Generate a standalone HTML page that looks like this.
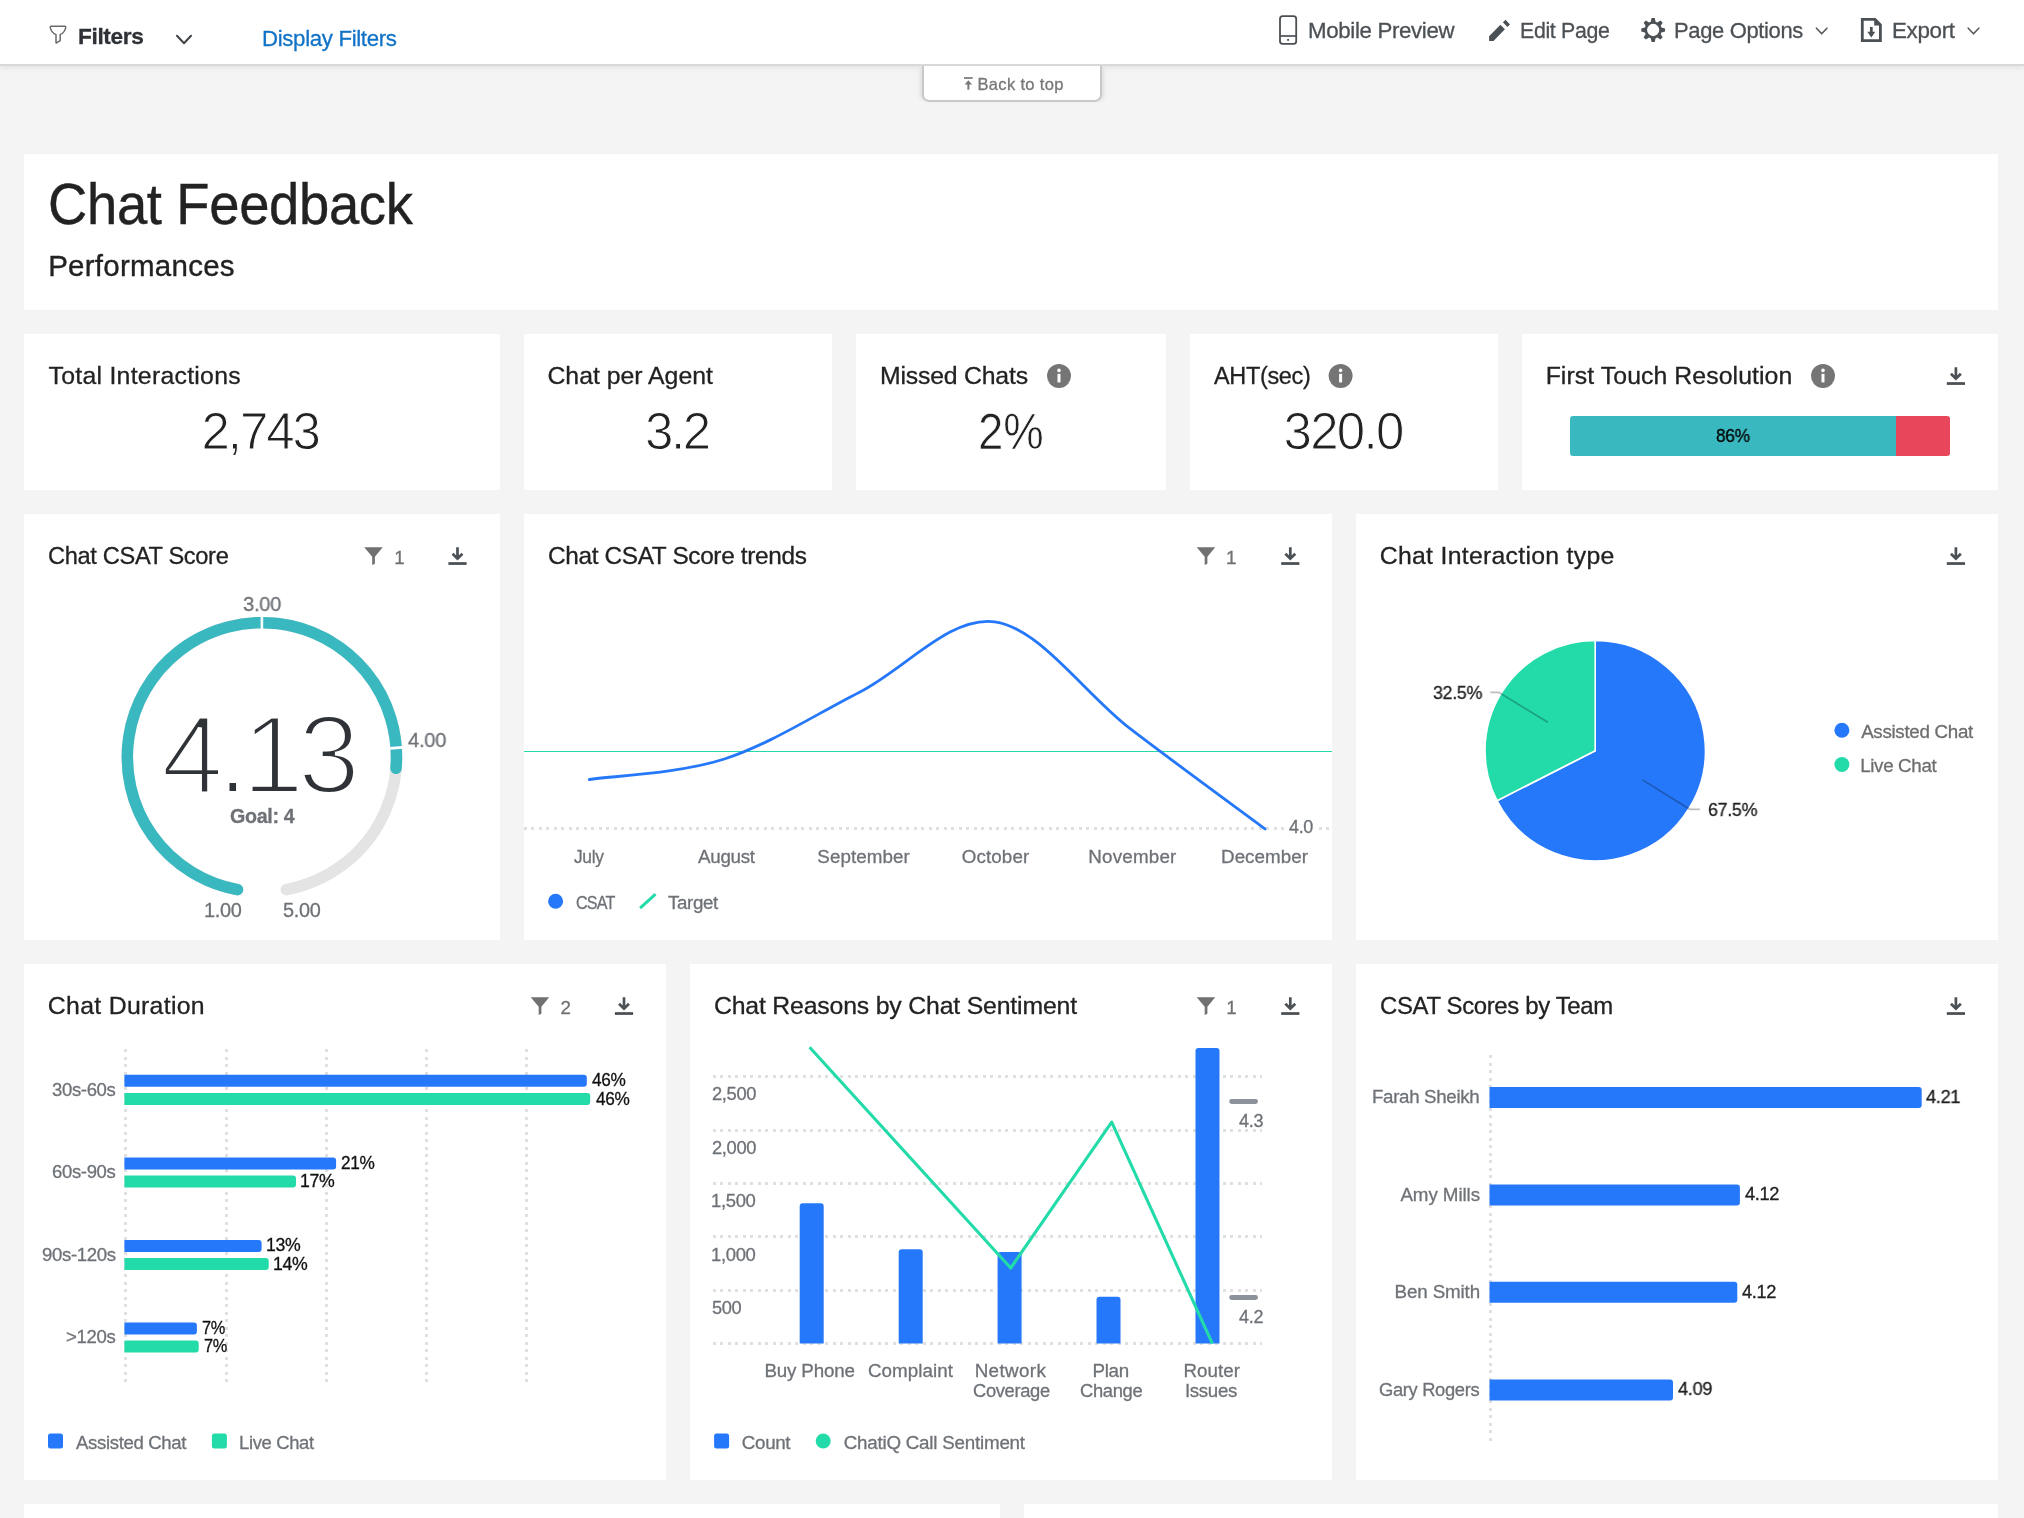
<!DOCTYPE html>
<html lang="en">
<head>
<meta charset="utf-8">
<title>Chat Feedback - Performances</title>
<meta name="viewport" content="width=2024">
<style>
*{box-sizing:border-box}
html,body{margin:0;padding:0}
body{width:2024px;height:1518px;overflow:hidden;background:#f4f4f4;font-family:"Liberation Sans",sans-serif;color:#222;position:relative}
#page{will-change:transform;position:absolute;left:0;top:0;width:2024px;height:1518px;overflow:hidden}
.card{position:absolute;background:#fff;overflow:visible}
.g{position:absolute;left:0;top:0;overflow:visible;display:block}
.t{position:absolute;white-space:nowrap;display:block;margin:0;padding:0;font-weight:400}
#bar{will-change:transform;position:absolute;left:0;top:0;width:2024px;height:66px;background:#fff;border-bottom:2px solid #d9d9d9;box-shadow:0 2px 5px rgba(0,0,0,.07)}
#btt{will-change:transform;position:absolute;left:922px;top:66px;width:180px;height:36px;background:#fff;border:2px solid #c9c9c9;border-top:0;border-radius:0 0 7px 7px;box-shadow:-4px 0 5px -3px rgba(0,0,0,.13),4px 0 5px -3px rgba(0,0,0,.13)}
#root{position:absolute;left:0;top:0;width:2024px;height:1518px;overflow:hidden}
@media (max-width:1100px){body{width:1012px;height:759px}#root{transform:scale(.5);transform-origin:0 0}}

</style>
</head>
<body>
<div id="root">
<main id="page">
<section class="card" id="hdr" style="left:24px;top:154px;width:1974px;height:156px">
<h1 class="t" style="left:23.87px;top:17.40px;font-size:56.5px;line-height:68px;transform:scaleX(0.9630);transform-origin:0 0;letter-spacing:-0.350px;-webkit-text-stroke:0.4px #222;">Chat Feedback</h1>
<p class="t" style="left:24.17px;top:93.93px;font-size:29.5px;line-height:35px;letter-spacing:0.252px;-webkit-text-stroke:0.35px #222;">Performances</p>
</section>
<section class="card" id="k1" style="left:24px;top:334px;width:476px;height:156px">
<h2 class="t" style="left:24.55px;top:26.65px;font-size:24.8px;line-height:30px;letter-spacing:0.273px;-webkit-text-stroke:0.3px #222;">Total Interactions</h2>
<span class="t" style="left:177.60px;top:67.40px;font-size:51.0px;line-height:61px;letter-spacing:-2.090px;-webkit-text-stroke:1.0px #fff;">2,743</span>
</section>
<section class="card" id="k2" style="left:524px;top:334px;width:308px;height:156px">
<h2 class="t" style="left:23.45px;top:26.65px;font-size:24.8px;line-height:30px;-webkit-text-stroke:0.3px #222;">Chat per Agent</h2>
<span class="t" style="left:121.10px;top:67.40px;font-size:51.0px;line-height:61px;letter-spacing:-2.467px;-webkit-text-stroke:1.0px #fff;">3.2</span>
</section>
<section class="card" id="k3" style="left:856px;top:334px;width:310px;height:156px">
<svg class="g" width="310" height="156" viewBox="856 334 310 156">
<circle cx="1059" cy="376" r="12" fill="#757575"/><rect x="1057.5" y="373.8" width="3" height="8.6" fill="#fff"/><circle cx="1059" cy="370.4" r="1.8" fill="#fff"/>
</svg>
<h2 class="t" style="left:23.95px;top:26.65px;font-size:24.8px;line-height:30px;letter-spacing:-0.192px;-webkit-text-stroke:0.3px #222;">Missed Chats</h2>
<span class="t" style="left:121.86px;top:67.25px;font-size:50.8px;line-height:61px;transform:scaleX(0.8968);transform-origin:0 0;-webkit-text-stroke:0.7px #fff;">2%</span>
</section>
<section class="card" id="k4" style="left:1190px;top:334px;width:308px;height:156px">
<svg class="g" width="308" height="156" viewBox="1190 334 308 156">
<circle cx="1340.6" cy="376" r="12" fill="#757575"/><rect x="1339.1" y="373.8" width="3" height="8.6" fill="#fff"/><circle cx="1340.6" cy="370.4" r="1.8" fill="#fff"/>
</svg>
<h2 class="t" style="left:23.95px;top:26.65px;font-size:24.8px;line-height:30px;transform:scaleX(0.9466);transform-origin:0 0;letter-spacing:-0.350px;-webkit-text-stroke:0.3px #222;">AHT(sec)</h2>
<span class="t" style="left:93.50px;top:67.40px;font-size:51.0px;line-height:61px;letter-spacing:-1.690px;-webkit-text-stroke:1.0px #fff;">320.0</span>
</section>
<section class="card" id="k5" style="left:1522px;top:334px;width:476px;height:156px">
<svg class="g" width="476" height="156" viewBox="1522 334 476 156">
<circle cx="1823" cy="376" r="12" fill="#757575"/><rect x="1821.5" y="373.8" width="3" height="8.6" fill="#fff"/><circle cx="1823" cy="370.4" r="1.8" fill="#fff"/>
<path d="M1955.90 367.15V379.15M1950.95 373.75L1955.90 378.70L1960.85 373.75" fill="none" stroke="#4b5055" stroke-width="2.7" stroke-linejoin="miter"/><rect x="1946.80" y="382.15" width="18.2" height="2.75" fill="#4b5055"/>
<path d="M1573 416h323v40h-323a3 3 0 0 1-3-3v-34a3 3 0 0 1 3-3z" fill="#3ab8c0"/><path d="M1896 416h51a3 3 0 0 1 3 3v34a3 3 0 0 1-3 3h-51z" fill="#e8465a"/>
</svg>
<h2 class="t" style="left:23.65px;top:26.65px;font-size:24.8px;line-height:30px;letter-spacing:0.084px;-webkit-text-stroke:0.3px #222;">First Touch Resolution</h2>
<span class="t" style="left:194.45px;top:90.25px;font-size:18.8px;line-height:23px;transform:scaleX(0.9223);transform-origin:0 0;letter-spacing:-0.350px;color:#000;-webkit-text-stroke:0.3px #000;">86%</span>
</section>
<section class="card" id="gauge" style="left:24px;top:514px;width:476px;height:426px">
<svg class="g" width="476" height="426" viewBox="24 514 476 426">
<path d="M364.20 547.15h18.5l-7.8 9.5v7l-2.7 1.3v-8.3z" fill="#717171"/>
<path d="M457.50 547.15V559.15M452.55 553.75L457.50 558.70L462.45 553.75" fill="none" stroke="#4b5055" stroke-width="2.7" stroke-linejoin="miter"/><rect x="448.40" y="562.15" width="18.2" height="2.75" fill="#4b5055"/>
<path d="M237.49 889.62A134.6 134.6 0 1 1 286.31 889.62" fill="none" stroke="#e4e4e4" stroke-width="11.5" stroke-linecap="round"/>
<path d="M237.49 889.62A134.6 134.6 0 1 1 396.04 768.35" fill="none" stroke="#3ab8c0" stroke-width="11.5" stroke-linecap="round"/>
<path d="M261.90 629.40L261.90 615.90" stroke="#fff" stroke-width="2.6"/>
<path d="M389.44 748.33L402.91 747.39" stroke="#fff" stroke-width="2.6"/>
</svg>
<h2 class="t" style="left:24.10px;top:26.65px;font-size:24.8px;line-height:30px;transform:scaleX(0.9521);transform-origin:0 0;letter-spacing:-0.350px;-webkit-text-stroke:0.3px #222;">Chat CSAT Score</h2>
<span class="t" style="left:370.15px;top:31.65px;font-size:18.8px;line-height:23px;color:#717171;-webkit-text-stroke:0.3px #717171;">1</span>
<span class="t" style="left:218.95px;top:76.65px;font-size:20.7px;line-height:25px;transform:scaleX(0.9765);transform-origin:0 0;letter-spacing:-0.350px;color:#6e7277;-webkit-text-stroke:0.3px #6e7277;">3.00</span>
<span class="t" style="left:384.25px;top:212.75px;font-size:20.7px;line-height:25px;transform:scaleX(0.9791);transform-origin:0 0;letter-spacing:-0.350px;color:#6e7277;-webkit-text-stroke:0.3px #6e7277;">4.00</span>
<span class="t" style="left:179.69px;top:382.95px;font-size:20.7px;line-height:25px;transform:scaleX(0.9626);transform-origin:0 0;letter-spacing:-0.350px;color:#6e7277;-webkit-text-stroke:0.3px #6e7277;">1.00</span>
<span class="t" style="left:259.15px;top:382.95px;font-size:20.7px;line-height:25px;transform:scaleX(0.9610);transform-origin:0 0;letter-spacing:-0.350px;color:#6e7277;-webkit-text-stroke:0.3px #6e7277;">5.00</span>
<span class="t" style="left:137.20px;top:174.00px;font-size:111.5px;line-height:134px;letter-spacing:-6.033px;color:#2f3337;-webkit-text-stroke:4px #fff;">4.13</span>
<span class="t" style="left:205.65px;top:289.25px;font-size:20.7px;line-height:25px;transform:scaleX(0.9516);transform-origin:0 0;letter-spacing:-0.350px;font-weight:700;color:#6e7277;-webkit-text-stroke:0.3px #6e7277;">Goal: 4</span>
</section>
<section class="card" id="trend" style="left:524px;top:514px;width:808px;height:426px">
<svg class="g" width="808" height="426" viewBox="524 514 808 426">
<path d="M1196.70 547.15h18.5l-7.8 9.5v7l-2.7 1.3v-8.3z" fill="#717171"/>
<path d="M1290.30 547.15V559.15M1285.35 553.75L1290.30 558.70L1295.25 553.75" fill="none" stroke="#4b5055" stroke-width="2.7" stroke-linejoin="miter"/><rect x="1281.20" y="562.15" width="18.2" height="2.75" fill="#4b5055"/>
<path d="M524 828.5H1331" stroke="#e0e0e0" stroke-width="3" stroke-dasharray="3 4 3 5"/>
<rect x="1284" y="818" width="32" height="18" fill="#fff"/>
<path d="M524 751.5H1332" stroke="#22dba9" stroke-width="1.2"/>
<path d="M589.30 779.50C611.82 776.08 679.37 773.55 724.40 759.00C769.43 744.45 814.45 715.07 859.50 692.20C904.55 669.33 949.65 615.77 994.70 621.80C1039.75 627.83 1084.75 693.88 1129.80 728.40C1174.85 762.92 1242.47 812.15 1265.00 828.90" fill="none" stroke="#2678fa" stroke-width="2.8" stroke-linecap="round" stroke-linejoin="round"/>
<circle cx="555.6" cy="901.2" r="7.5" fill="#2678fa"/>
<path d="M640.1 908.2L655.5 894.2" stroke="#22dba9" stroke-width="3"/>
</svg>
<h2 class="t" style="left:23.57px;top:26.65px;font-size:24.8px;line-height:30px;transform:scaleX(0.9833);transform-origin:0 0;letter-spacing:-0.350px;-webkit-text-stroke:0.3px #222;">Chat CSAT Score trends</h2>
<span class="t" style="left:701.95px;top:31.65px;font-size:18.8px;line-height:23px;color:#717171;-webkit-text-stroke:0.3px #717171;">1</span>
<span class="t" style="left:50.05px;top:330.85px;font-size:18.8px;line-height:23px;transform:scaleX(0.9254);transform-origin:0 0;letter-spacing:-0.350px;color:#6e7277;-webkit-text-stroke:0.3px #6e7277;">July</span>
<span class="t" style="left:174.05px;top:330.85px;font-size:18.8px;line-height:23px;letter-spacing:-0.311px;color:#6e7277;-webkit-text-stroke:0.3px #6e7277;">August</span>
<span class="t" style="left:293.35px;top:330.85px;font-size:18.8px;line-height:23px;letter-spacing:0.060px;color:#6e7277;-webkit-text-stroke:0.3px #6e7277;">September</span>
<span class="t" style="left:437.65px;top:330.85px;font-size:18.8px;line-height:23px;letter-spacing:0.141px;color:#6e7277;-webkit-text-stroke:0.3px #6e7277;">October</span>
<span class="t" style="left:564.35px;top:330.85px;font-size:18.8px;line-height:23px;letter-spacing:0.189px;color:#6e7277;-webkit-text-stroke:0.3px #6e7277;">November</span>
<span class="t" style="left:697.05px;top:330.85px;font-size:18.8px;line-height:23px;letter-spacing:0.031px;color:#6e7277;-webkit-text-stroke:0.3px #6e7277;">December</span>
<span class="t" style="left:764.75px;top:300.85px;font-size:18.8px;line-height:23px;transform:scaleX(0.9574);transform-origin:0 0;letter-spacing:-0.350px;color:#6e7277;-webkit-text-stroke:0.3px #6e7277;">4.0</span>
<span class="t" style="left:51.75px;top:376.95px;font-size:18.8px;line-height:23px;transform:scaleX(0.8600);transform-origin:0 0;letter-spacing:-1.020px;color:#6e7277;-webkit-text-stroke:0.3px #6e7277;">CSAT</span>
<span class="t" style="left:143.65px;top:376.95px;font-size:18.8px;line-height:23px;transform:scaleX(0.9975);transform-origin:0 0;letter-spacing:-0.350px;color:#6e7277;-webkit-text-stroke:0.3px #6e7277;">Target</span>
</section>
<section class="card" id="pie" style="left:1356px;top:514px;width:642px;height:426px">
<svg class="g" width="642" height="426" viewBox="1356 514 642 426">
<path d="M1955.90 547.15V559.15M1950.95 553.75L1955.90 558.70L1960.85 553.75" fill="none" stroke="#4b5055" stroke-width="2.7" stroke-linejoin="miter"/><rect x="1946.80" y="562.15" width="18.2" height="2.75" fill="#4b5055"/>
<path d="M1595.2 750.7L1595.2 640.5A110.2 110.2 0 1 1 1497.01 800.73Z" fill="#2678fa" stroke="#fff" stroke-width="1.6" stroke-linejoin="round"/>
<path d="M1595.2 750.7L1497.01 800.73A110.2 110.2 0 0 1 1595.2 640.5Z" fill="#22dba9" stroke="#fff" stroke-width="1.6" stroke-linejoin="round"/>
<path d="M1490.4 692.3H1498.8L1547.8 722.2" fill="none" stroke="#000" stroke-opacity=".26" stroke-width="1.7"/>
<path d="M1642.5 779.9L1689.8 809.3H1699.9" fill="none" stroke="#000" stroke-opacity=".26" stroke-width="1.7"/>
<circle cx="1841.9" cy="730.3" r="7.5" fill="#2678fa"/><circle cx="1841.9" cy="764.5" r="7.5" fill="#22dba9"/>
</svg>
<h2 class="t" style="left:23.75px;top:26.65px;font-size:24.8px;line-height:30px;letter-spacing:0.289px;-webkit-text-stroke:0.3px #222;">Chat Interaction type</h2>
<span class="t" style="left:76.65px;top:167.05px;font-size:18.8px;line-height:23px;transform:scaleX(0.9510);transform-origin:0 0;letter-spacing:-0.350px;-webkit-text-stroke:0.3px #222;">32.5%</span>
<span class="t" style="left:352.05px;top:283.95px;font-size:18.8px;line-height:23px;transform:scaleX(0.9530);transform-origin:0 0;letter-spacing:-0.350px;-webkit-text-stroke:0.3px #222;">67.5%</span>
<span class="t" style="left:505.15px;top:205.95px;font-size:18.8px;line-height:23px;letter-spacing:-0.313px;color:#6e6e6e;-webkit-text-stroke:0.3px #6e6e6e;">Assisted Chat</span>
<span class="t" style="left:504.15px;top:239.95px;font-size:18.8px;line-height:23px;letter-spacing:-0.341px;color:#6e6e6e;-webkit-text-stroke:0.3px #6e6e6e;">Live Chat</span>
</section>
<section class="card" id="dur" style="left:24px;top:964px;width:642px;height:516px">
<svg class="g" width="642" height="516" viewBox="24 964 642 516">
<path d="M530.70 997.15h18.5l-7.8 9.5v7l-2.7 1.3v-8.3z" fill="#717171"/>
<path d="M624.00 997.15V1009.15M619.05 1003.75L624.00 1008.70L628.95 1003.75" fill="none" stroke="#4b5055" stroke-width="2.7" stroke-linejoin="miter"/><rect x="614.90" y="1012.15" width="18.2" height="2.75" fill="#4b5055"/>
<path d="M125.5 1049V1383" stroke="#e0e0e0" stroke-width="3" stroke-dasharray="3 5 3 4"/>
<path d="M226.5 1049V1383" stroke="#e0e0e0" stroke-width="3" stroke-dasharray="3 5 3 4"/>
<path d="M326.5 1049V1383" stroke="#e0e0e0" stroke-width="3" stroke-dasharray="3 5 3 4"/>
<path d="M426.5 1049V1383" stroke="#e0e0e0" stroke-width="3" stroke-dasharray="3 5 3 4"/>
<path d="M526.5 1049V1383" stroke="#e0e0e0" stroke-width="3" stroke-dasharray="3 5 3 4"/>
<path d="M124.4 1074.85H583.8a3 3 0 0 1 3 3V1083.85a3 3 0 0 1 -3 3H124.4z" fill="#2678fa"/>
<path d="M124.4 1093.05H587.2a3 3 0 0 1 3 3V1102.05a3 3 0 0 1 -3 3H124.4z" fill="#22dba9"/>
<path d="M124.4 1157.4H333.1a3 3 0 0 1 3 3V1166.4a3 3 0 0 1 -3 3H124.4z" fill="#2678fa"/>
<path d="M124.4 1175.6000000000001H293.0a3 3 0 0 1 3 3V1184.6000000000001a3 3 0 0 1 -3 3H124.4z" fill="#22dba9"/>
<path d="M124.4 1239.9H258.6a3 3 0 0 1 3 3V1248.9a3 3 0 0 1 -3 3H124.4z" fill="#2678fa"/>
<path d="M124.4 1258.1000000000001H265.7a3 3 0 0 1 3 3V1267.1000000000001a3 3 0 0 1 -3 3H124.4z" fill="#22dba9"/>
<path d="M124.4 1322.4H193.9a3 3 0 0 1 3 3V1331.4a3 3 0 0 1 -3 3H124.4z" fill="#2678fa"/>
<path d="M124.4 1340.6000000000001H195.7a3 3 0 0 1 3 3V1349.6000000000001a3 3 0 0 1 -3 3H124.4z" fill="#22dba9"/>
<rect x="48.0" y="1433.4" width="15" height="15" rx="2.5" fill="#2678fa"/>
<rect x="211.9" y="1433.4" width="15" height="15" rx="2.5" fill="#22dba9"/>
</svg>
<h2 class="t" style="left:23.85px;top:26.65px;font-size:24.8px;line-height:30px;letter-spacing:0.316px;-webkit-text-stroke:0.3px #222;">Chat Duration</h2>
<span class="t" style="left:536.45px;top:31.65px;font-size:18.8px;line-height:23px;color:#717171;-webkit-text-stroke:0.3px #717171;">2</span>
<span class="t" style="left:27.85px;top:114.05px;font-size:18.8px;line-height:23px;transform:scaleX(0.9856);transform-origin:0 0;letter-spacing:-0.350px;color:#6e7277;-webkit-text-stroke:0.3px #6e7277;">30s-60s</span>
<span class="t" style="left:568.15px;top:104.30px;font-size:18.8px;line-height:23px;transform:scaleX(0.9169);transform-origin:0 0;letter-spacing:-0.350px;color:#111;-webkit-text-stroke:0.3px #111;">46%</span>
<span class="t" style="left:571.55px;top:122.50px;font-size:18.8px;line-height:23px;transform:scaleX(0.9169);transform-origin:0 0;letter-spacing:-0.350px;color:#111;-webkit-text-stroke:0.3px #111;">46%</span>
<span class="t" style="left:27.85px;top:196.25px;font-size:18.8px;line-height:23px;transform:scaleX(0.9856);transform-origin:0 0;letter-spacing:-0.350px;color:#6e7277;-webkit-text-stroke:0.3px #6e7277;">60s-90s</span>
<span class="t" style="left:317.45px;top:186.85px;font-size:18.8px;line-height:23px;transform:scaleX(0.9169);transform-origin:0 0;letter-spacing:-0.350px;color:#111;-webkit-text-stroke:0.3px #111;">21%</span>
<span class="t" style="left:276.41px;top:205.05px;font-size:18.8px;line-height:23px;transform:scaleX(0.9422);transform-origin:0 0;letter-spacing:-0.350px;color:#111;-webkit-text-stroke:0.3px #111;">17%</span>
<span class="t" style="left:17.55px;top:278.65px;font-size:18.8px;line-height:23px;transform:scaleX(0.9903);transform-origin:0 0;letter-spacing:-0.350px;color:#6e7277;-webkit-text-stroke:0.3px #6e7277;">90s-120s</span>
<span class="t" style="left:242.01px;top:269.35px;font-size:18.8px;line-height:23px;transform:scaleX(0.9422);transform-origin:0 0;letter-spacing:-0.350px;color:#111;-webkit-text-stroke:0.3px #111;">13%</span>
<span class="t" style="left:249.11px;top:287.55px;font-size:18.8px;line-height:23px;transform:scaleX(0.9422);transform-origin:0 0;letter-spacing:-0.350px;color:#111;-webkit-text-stroke:0.3px #111;">14%</span>
<span class="t" style="left:41.85px;top:360.85px;font-size:18.8px;line-height:23px;transform:scaleX(0.9899);transform-origin:0 0;letter-spacing:-0.350px;color:#6e7277;-webkit-text-stroke:0.3px #6e7277;">&gt;120s</span>
<span class="t" style="left:178.25px;top:351.85px;font-size:18.8px;line-height:23px;transform:scaleX(0.8710);transform-origin:0 0;letter-spacing:-0.350px;color:#111;-webkit-text-stroke:0.3px #111;">7%</span>
<span class="t" style="left:180.05px;top:370.05px;font-size:18.8px;line-height:23px;transform:scaleX(0.8710);transform-origin:0 0;letter-spacing:-0.350px;color:#111;-webkit-text-stroke:0.3px #111;">7%</span>
<span class="t" style="left:51.75px;top:466.85px;font-size:18.8px;line-height:23px;transform:scaleX(0.9889);transform-origin:0 0;letter-spacing:-0.350px;color:#6e7277;-webkit-text-stroke:0.3px #6e7277;">Assisted Chat</span>
<span class="t" style="left:214.67px;top:466.85px;font-size:18.8px;line-height:23px;transform:scaleX(0.9813);transform-origin:0 0;letter-spacing:-0.350px;color:#6e7277;-webkit-text-stroke:0.3px #6e7277;">Live Chat</span>
</section>
<section class="card" id="reas" style="left:690px;top:964px;width:642px;height:516px">
<svg class="g" width="642" height="516" viewBox="690 964 642 516">
<path d="M1196.70 997.15h18.5l-7.8 9.5v7l-2.7 1.3v-8.3z" fill="#717171"/>
<path d="M1290.30 997.15V1009.15M1285.35 1003.75L1290.30 1008.70L1295.25 1003.75" fill="none" stroke="#4b5055" stroke-width="2.7" stroke-linejoin="miter"/><rect x="1281.20" y="1012.15" width="18.2" height="2.75" fill="#4b5055"/>
<path d="M713 1076.5H1262" stroke="#e0e0e0" stroke-width="3" stroke-dasharray="3 4 3 5"/>
<path d="M713 1130.5H1262" stroke="#e0e0e0" stroke-width="3" stroke-dasharray="3 4 3 5"/>
<path d="M713 1183.5H1262" stroke="#e0e0e0" stroke-width="3" stroke-dasharray="3 4 3 5"/>
<path d="M713 1236.5H1262" stroke="#e0e0e0" stroke-width="3" stroke-dasharray="3 4 3 5"/>
<path d="M713 1290.5H1262" stroke="#e0e0e0" stroke-width="3" stroke-dasharray="3 4 3 5"/>
<path d="M713 1343.5H1262" stroke="#e0e0e0" stroke-width="3" stroke-dasharray="3 4 3 5"/>
<path d="M799.7 1343.6V1206.3a3 3 0 0 1 3 -3H820.7a3 3 0 0 1 3 3V1343.6z" fill="#2678fa"/>
<path d="M898.7 1343.6V1252.3a3 3 0 0 1 3 -3H919.7a3 3 0 0 1 3 3V1343.6z" fill="#2678fa"/>
<path d="M997.6 1343.6V1254.9a3 3 0 0 1 3 -3H1018.6a3 3 0 0 1 3 3V1343.6z" fill="#2678fa"/>
<path d="M1096.5 1343.6V1299.8a3 3 0 0 1 3 -3H1117.5a3 3 0 0 1 3 3V1343.6z" fill="#2678fa"/>
<path d="M1195.5 1343.6V1051a3 3 0 0 1 3 -3H1216.5a3 3 0 0 1 3 3V1343.6z" fill="#2678fa"/>
<path d="M809.6 1047.3L1010.7 1268L1111.7 1122.1L1212.4 1343.6" fill="none" stroke="#22dba9" stroke-width="3.1" stroke-linejoin="round"/>
<path d="M1231.6 1101.5H1255.6" stroke="#8b9299" stroke-width="4.8" stroke-linecap="round"/>
<path d="M1231.6 1297.5H1255.6" stroke="#8b9299" stroke-width="4.8" stroke-linecap="round"/>
<rect x="714.1" y="1433.4" width="15" height="15" rx="2.5" fill="#2678fa"/>
<circle cx="823.2" cy="1441.0" r="7.5" fill="#22dba9"/>
</svg>
<h2 class="t" style="left:23.95px;top:26.65px;font-size:24.8px;line-height:30px;letter-spacing:-0.170px;-webkit-text-stroke:0.3px #222;">Chat Reasons by Chat Sentiment</h2>
<span class="t" style="left:536.15px;top:31.65px;font-size:18.8px;line-height:23px;color:#717171;-webkit-text-stroke:0.3px #717171;">1</span>
<span class="t" style="left:21.85px;top:117.95px;font-size:18.8px;line-height:23px;transform:scaleX(0.9744);transform-origin:0 0;letter-spacing:-0.350px;color:#6e7277;-webkit-text-stroke:0.3px #6e7277;">2,500</span>
<span class="t" style="left:21.85px;top:171.95px;font-size:18.8px;line-height:23px;transform:scaleX(0.9744);transform-origin:0 0;letter-spacing:-0.350px;color:#6e7277;-webkit-text-stroke:0.3px #6e7277;">2,000</span>
<span class="t" style="left:21.47px;top:224.95px;font-size:18.8px;line-height:23px;transform:scaleX(0.9829);transform-origin:0 0;letter-spacing:-0.350px;color:#6e7277;-webkit-text-stroke:0.3px #6e7277;">1,500</span>
<span class="t" style="left:21.47px;top:278.95px;font-size:18.8px;line-height:23px;transform:scaleX(0.9829);transform-origin:0 0;letter-spacing:-0.350px;color:#6e7277;-webkit-text-stroke:0.3px #6e7277;">1,000</span>
<span class="t" style="left:21.85px;top:331.95px;font-size:18.8px;line-height:23px;transform:scaleX(0.9705);transform-origin:0 0;letter-spacing:-0.350px;color:#6e7277;-webkit-text-stroke:0.3px #6e7277;">500</span>
<span class="t" style="left:549.45px;top:144.85px;font-size:18.8px;line-height:23px;transform:scaleX(0.9614);transform-origin:0 0;letter-spacing:-0.350px;color:#6e7277;-webkit-text-stroke:0.3px #6e7277;">4.3</span>
<span class="t" style="left:549.45px;top:340.85px;font-size:18.8px;line-height:23px;transform:scaleX(0.9614);transform-origin:0 0;letter-spacing:-0.350px;color:#6e7277;-webkit-text-stroke:0.3px #6e7277;">4.2</span>
<span class="t" style="left:74.45px;top:395.05px;font-size:18.8px;line-height:23px;letter-spacing:-0.168px;color:#6e7277;-webkit-text-stroke:0.3px #6e7277;">Buy Phone</span>
<span class="t" style="left:177.95px;top:395.05px;font-size:18.8px;line-height:23px;letter-spacing:0.058px;color:#6e7277;-webkit-text-stroke:0.3px #6e7277;">Complaint</span>
<span class="t" style="left:284.65px;top:395.05px;font-size:18.8px;line-height:23px;letter-spacing:0.385px;color:#6e7277;-webkit-text-stroke:0.3px #6e7277;">Network</span>
<span class="t" style="left:282.75px;top:414.85px;font-size:18.8px;line-height:23px;transform:scaleX(0.9766);transform-origin:0 0;letter-spacing:-0.350px;color:#6e7277;-webkit-text-stroke:0.3px #6e7277;">Coverage</span>
<span class="t" style="left:402.55px;top:395.05px;font-size:18.8px;line-height:23px;letter-spacing:-0.315px;color:#6e7277;-webkit-text-stroke:0.3px #6e7277;">Plan</span>
<span class="t" style="left:390.45px;top:414.85px;font-size:18.8px;line-height:23px;transform:scaleX(0.9781);transform-origin:0 0;letter-spacing:-0.350px;color:#6e7277;-webkit-text-stroke:0.3px #6e7277;">Change</span>
<span class="t" style="left:493.45px;top:395.05px;font-size:18.8px;line-height:23px;letter-spacing:0.057px;color:#6e7277;-webkit-text-stroke:0.3px #6e7277;">Router</span>
<span class="t" style="left:495.35px;top:414.85px;font-size:18.8px;line-height:23px;transform:scaleX(0.9953);transform-origin:0 0;letter-spacing:-0.350px;color:#6e7277;-webkit-text-stroke:0.3px #6e7277;">Issues</span>
<span class="t" style="left:51.85px;top:466.85px;font-size:18.8px;line-height:23px;letter-spacing:-0.350px;color:#6e7277;-webkit-text-stroke:0.3px #6e7277;">Count</span>
<span class="t" style="left:153.65px;top:466.85px;font-size:18.8px;line-height:23px;letter-spacing:-0.219px;color:#6e7277;-webkit-text-stroke:0.3px #6e7277;">ChatiQ Call Sentiment</span>
</section>
<section class="card" id="team" style="left:1356px;top:964px;width:642px;height:516px">
<svg class="g" width="642" height="516" viewBox="1356 964 642 516">
<path d="M1955.90 997.15V1009.15M1950.95 1003.75L1955.90 1008.70L1960.85 1003.75" fill="none" stroke="#4b5055" stroke-width="2.7" stroke-linejoin="miter"/><rect x="1946.80" y="1012.15" width="18.2" height="2.75" fill="#4b5055"/>
<path d="M1490.5 1055V1441" stroke="#e0e0e0" stroke-width="3" stroke-dasharray="3 5 3 4"/>
<path d="M1489.5 1086.9H1918.7a3 3 0 0 1 3 3V1104.9a3 3 0 0 1 -3 3H1489.5z" fill="#2678fa"/>
<path d="M1489.5 1184.5H1736.9a3 3 0 0 1 3 3V1202.5a3 3 0 0 1 -3 3H1489.5z" fill="#2678fa"/>
<path d="M1489.5 1281.8H1734.3a3 3 0 0 1 3 3V1299.8a3 3 0 0 1 -3 3H1489.5z" fill="#2678fa"/>
<path d="M1489.5 1379.5H1670a3 3 0 0 1 3 3V1397.5a3 3 0 0 1 -3 3H1489.5z" fill="#2678fa"/>
</svg>
<h2 class="t" style="left:23.59px;top:26.65px;font-size:24.8px;line-height:30px;transform:scaleX(0.9643);transform-origin:0 0;letter-spacing:-0.350px;-webkit-text-stroke:0.3px #222;">CSAT Scores by Team</h2>
<span class="t" style="left:16.45px;top:121.05px;font-size:18.8px;line-height:23px;transform:scaleX(0.9980);transform-origin:0 0;letter-spacing:-0.350px;color:#6e7277;-webkit-text-stroke:0.3px #6e7277;">Farah Sheikh</span>
<span class="t" style="left:570.45px;top:120.75px;font-size:18.8px;line-height:23px;transform:scaleX(0.9727);transform-origin:0 0;letter-spacing:-0.350px;-webkit-text-stroke:0.3px #222;">4.21</span>
<span class="t" style="left:44.45px;top:218.65px;font-size:18.8px;line-height:23px;letter-spacing:-0.093px;color:#6e7277;-webkit-text-stroke:0.3px #6e7277;">Amy Mills</span>
<span class="t" style="left:388.65px;top:218.35px;font-size:18.8px;line-height:23px;transform:scaleX(0.9727);transform-origin:0 0;letter-spacing:-0.350px;-webkit-text-stroke:0.3px #222;">4.12</span>
<span class="t" style="left:38.55px;top:315.95px;font-size:18.8px;line-height:23px;letter-spacing:-0.137px;color:#6e7277;-webkit-text-stroke:0.3px #6e7277;">Ben Smith</span>
<span class="t" style="left:386.05px;top:315.65px;font-size:18.8px;line-height:23px;transform:scaleX(0.9727);transform-origin:0 0;letter-spacing:-0.350px;-webkit-text-stroke:0.3px #222;">4.12</span>
<span class="t" style="left:23.45px;top:413.65px;font-size:18.8px;line-height:23px;transform:scaleX(0.9769);transform-origin:0 0;letter-spacing:-0.350px;color:#6e7277;-webkit-text-stroke:0.3px #6e7277;">Gary Rogers</span>
<span class="t" style="left:321.75px;top:413.35px;font-size:18.8px;line-height:23px;transform:scaleX(0.9727);transform-origin:0 0;letter-spacing:-0.350px;-webkit-text-stroke:0.3px #222;">4.09</span>
</section>
<section class="card" id="n1" style="left:24px;top:1504px;width:976px;height:40px">
</section>
<section class="card" id="n2" style="left:1024px;top:1504px;width:974px;height:40px">
</section>
</main>
<header id="bar">
<svg class="g" width="2024" height="64" viewBox="0 0 2024 64"><path d="M51.2 26.3H64.8Q66 26.3 65.7 27.6Q64.6 32.6 60.2 34.6V40.6L56.6 42.9Q56 43.1 56 42.3V34.6Q51.4 32.6 50.3 27.6Q50 26.3 51.2 26.3Z" fill="none" stroke="#6a6a6a" stroke-width="1.5" stroke-linejoin="round"/>
<path d="M177.0 35.75L184 43.25L191.0 35.75" fill="none" stroke="#43484d" stroke-width="2.1" stroke-linecap="round" stroke-linejoin="round"/>
<path d="M1816.45 28.2L1821.7 33.8L1826.95 28.2" fill="none" stroke="#555a5f" stroke-width="1.6" stroke-linecap="round" stroke-linejoin="round"/>
<path d="M1968.25 28.2L1973.5 33.8L1978.75 28.2" fill="none" stroke="#555a5f" stroke-width="1.6" stroke-linecap="round" stroke-linejoin="round"/>
<rect x="1280" y="16.1" width="16.2" height="27.8" rx="2.7" fill="none" stroke="#4b5055" stroke-width="1.8"/><path d="M1280 36h16.2" stroke="#4b5055" stroke-width="1.7"/><circle cx="1288.1" cy="39.9" r="1.05" fill="#4b5055"/>
<path d="M1489.1 40.9V36.3L1500.4 24.8L1504.9 29.2L1493.5 40.9Z M1505.5 19.7L1510 24.5L1507.4 27L1502.9 22.3Z" fill="#4b5055"/>
<path d="M1651.55 18.11L1654.75 18.11L1655.55 21.74L1657.29 22.46L1660.43 20.46L1662.69 22.72L1660.69 25.86L1661.41 27.60L1665.04 28.40L1665.04 31.60L1661.41 32.40L1660.69 34.14L1662.69 37.28L1660.43 39.54L1657.29 37.54L1655.55 38.26L1654.75 41.89L1651.55 41.89L1650.75 38.26L1649.01 37.54L1645.87 39.54L1643.61 37.28L1645.61 34.14L1644.89 32.40L1641.26 31.60L1641.26 28.40L1644.89 27.60L1645.61 25.86L1643.61 22.72L1645.87 20.46L1649.01 22.46L1650.75 21.74ZM1647.0500000000002 30.0a6.1 6.1 0 1 0 12.2 0a6.1 6.1 0 1 0 -12.2 0Z" fill="#4b5055" fill-rule="evenodd"/>
<path d="M1860.9 18.1H1875.6L1881.8 24.3V41.9H1860.9Z M1863.7 20.8V39.2H1879V25.5H1874.2V20.8Z" fill="#4b5055" fill-rule="evenodd"/><path d="M1869.95 27h2.75v4.8h2.6l-3.98 5.8l-3.98 -5.8h2.6z" fill="#4b5055"/></svg>
<span class="t" style="left:78.16px;top:23.15px;font-size:22.8px;line-height:27px;transform:scaleX(0.9933);transform-origin:0 0;letter-spacing:-0.350px;font-weight:700;color:#2d3136;-webkit-text-stroke:0.3px #2d3136;">Filters</span>
<span class="t" style="left:262.16px;top:24.85px;font-size:22.4px;line-height:27px;transform:scaleX(0.9941);transform-origin:0 0;letter-spacing:-0.350px;color:#1173c7;-webkit-text-stroke:0.3px #1173c7;">Display Filters</span>
<span class="t" style="left:1308.45px;top:16.65px;font-size:22.4px;line-height:27px;transform:scaleX(0.9953);transform-origin:0 0;letter-spacing:-0.350px;color:#4b5055;-webkit-text-stroke:0.3px #4b5055;">Mobile Preview</span>
<span class="t" style="left:1520.20px;top:16.65px;font-size:22.4px;line-height:27px;transform:scaleX(0.9521);transform-origin:0 0;letter-spacing:-0.350px;color:#4b5055;-webkit-text-stroke:0.3px #4b5055;">Edit Page</span>
<span class="t" style="left:1674.17px;top:16.65px;font-size:22.4px;line-height:27px;transform:scaleX(0.9806);transform-origin:0 0;letter-spacing:-0.350px;color:#4b5055;-webkit-text-stroke:0.3px #4b5055;">Page Options</span>
<span class="t" style="left:1891.95px;top:16.65px;font-size:22.4px;line-height:27px;letter-spacing:-0.318px;color:#4b5055;-webkit-text-stroke:0.3px #4b5055;">Export</span>
</header>
<div id="btt">
<svg class="g" width="176" height="34" viewBox="924 66 176 34"><path d="M964 78h8.7" stroke="#777" stroke-width="1.7"/><path d="M968.35 89.7v-7" stroke="#777" stroke-width="2"/><path d="M964.6 84.6l3.75-4.3 3.75 4.3z" fill="#777"/></svg>
<span class="t" style="left:53.45px;top:7.55px;font-size:16.5px;line-height:20px;letter-spacing:0.343px;color:#777;-webkit-text-stroke:0.3px #777;">Back to top</span>
</div>
</div>
</body>
</html>
